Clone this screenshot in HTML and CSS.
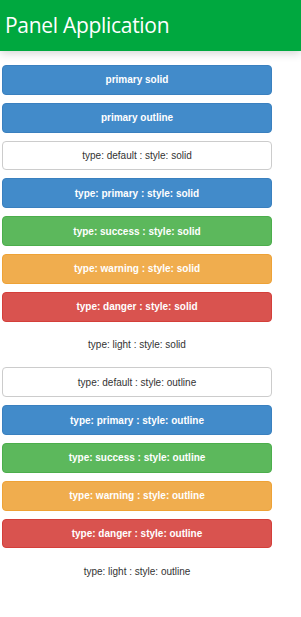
FILE: index.html
```html
<!doctype html>
<html lang="en">
<head>
  <meta charset="utf-8">
  <title>Panel Application</title>
  <link rel="stylesheet" href="styles.css">
</head>
<body>
  <header class="app-header">
    <h1 class="app-title">Panel Application</h1>
  </header>

  <main class="app-content">
    <button class="btn btn-primary">primary solid</button>
    <button class="btn btn-primary">primary outline</button>
    <button class="btn btn-default">type: default : style: solid</button>
    <button class="btn btn-primary">type: primary : style: solid</button>
    <button class="btn btn-success">type: success : style: solid</button>
    <button class="btn btn-warning">type: warning : style: solid</button>
    <button class="btn btn-danger">type: danger : style: solid</button>
    <button class="btn btn-light">type: light : style: solid</button>
    <button class="btn btn-default">type: default : style: outline</button>
    <button class="btn btn-primary">type: primary : style: outline</button>
    <button class="btn btn-success">type: success : style: outline</button>
    <button class="btn btn-warning">type: warning : style: outline</button>
    <button class="btn btn-danger">type: danger : style: outline</button>
    <button class="btn btn-light">type: light : style: outline</button>
  </main>
</body>
</html>
```

FILE: styles.css
```css
:root {
  --green: #00a83f;
  --primary: #428bca;
  --success: #5cb85c;
  --warning: #f0ad4e;
  --danger: #d9534f;
  --text: #333;
}

html, body {
  margin: 0;
  padding: 0;
  background: #fff;
  font-family: "Liberation Sans", Arial, sans-serif;
}

.app-header {
  height: 51px;
  background-color: var(--green);
  box-shadow: 0 2px 9px rgba(0, 0, 0, 0.18);
  display: flex;
  align-items: center;
}

.app-title {
  margin: 0 0 2px 5px;
  font-family: "Open Sans", sans-serif;
  font-weight: 400;
  font-size: 21px;
  letter-spacing: -0.3px;
  color: #fff;
}

.app-content {
  display: flex;
  flex-direction: column;
  gap: 8px;
  padding: 14px 0 0 2px;
}

.btn {
  width: 270px;
  height: 29.8px;
  margin: 0;
  padding: 0 8px;
  border: 1px solid transparent;
  border-radius: 4px;
  font-family: "Liberation Sans", Arial, sans-serif;
  font-size: 10px;
  font-weight: bold;
  color: #fff;
  text-align: center;
}

.btn-primary {
  background-color: var(--primary);
  border-color: #3a80bf;
}

.btn-success {
  background-color: var(--success);
  border-color: #4cae4c;
}

.btn-warning {
  background-color: var(--warning);
  border-color: #eea236;
}

.btn-danger {
  background-color: var(--danger);
  border-color: #d43f3a;
}

.btn-default {
  background-color: #fff;
  border-color: #ccc;
  color: var(--text);
  font-weight: normal;
}

.btn-light {
  background-color: transparent;
  color: var(--text);
  font-weight: normal;
}
```
